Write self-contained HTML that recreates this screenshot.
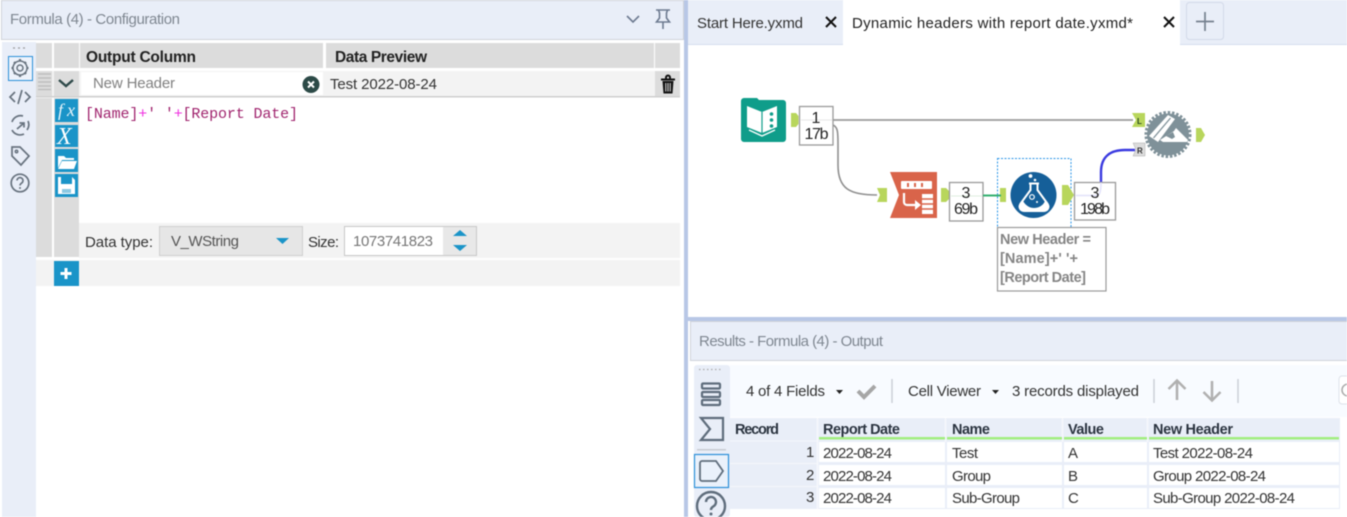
<!DOCTYPE html>
<html><head><meta charset="utf-8"><title>Formula Configuration</title>
<style>
html,body{margin:0;padding:0;width:1347px;height:517px;overflow:hidden;background:#fff}
svg{display:block;filter:blur(.4px)}
text{font-family:"Liberation Sans",sans-serif;font-size:15px;fill:#333;white-space:pre}
.t{fill:#7f8791}.b{font-weight:bold;fill:#222;font-size:15.5px}.m{font-family:"Liberation Mono",monospace;font-size:15px}
.h{font-weight:bold;fill:#2b3440;font-size:14.5px}.a{font-weight:bold;fill:#858585;font-size:14.5px}
.c{text-anchor:middle;fill:#222;font-size:16px}
</style></head><body>
<svg width="1347" height="517" viewBox="0 0 1347 517" xmlns="http://www.w3.org/2000/svg">
<rect width="1347" height="517" fill="#fff"/>
<!-- config header -->
<rect x="1.500" y="0.500" width="682" height="39" fill="#e9eef8" stroke="#d0d3da"/>
<text class="t" x="10" y="24" textLength="170">Formula (4) - Configuration</text>
<path d="M627 16l6 6 6-6" fill="none" stroke="#6d7a90" stroke-width="1.600"/>
<path d="M656 10h14M658.500 10l1 3v5l-3 4h13l-3-4v-5l1-3M663 22v7" fill="none" stroke="#6d7a90" stroke-width="1.600"/>
<!-- config side -->
<rect x="2" y="42" width="34" height="475" fill="#e9eef8"/>
<path d="M13 48h2M18 48h2M23 48h2" stroke="#9a9a9a" stroke-width="1.200"/>
<rect x="8.500" y="56.500" width="24" height="24" fill="#edf2fb" stroke="#2b8fd8" stroke-width="1"/>
<g fill="none" stroke="#68737f" stroke-width="1.500">
<circle cx="20" cy="68" r="3"/><circle cx="20" cy="68" r="7"/>
<path d="M20 59v2M20 75v2M11.500 68h2M26.500 68h2M14 62l1.500 1.500M24.500 72.500L26 74M14 74l1.500-1.500M24.500 63.500L26 62" stroke-width="2.200"/>
<path d="M15 92l-5 5 5 5M25 92l5 5-5 5M22 90l-4 14" stroke-width="1.700"/>
<path d="M12 122a9 9 0 0 1 11-6M28 121a9 9 0 0 1-1 9M24 134a9 9 0 0 1-12-4M17 129l7-6M19.500 123h4.500v4.500" stroke-width="1.700"/>
<path d="M12 147h8l9 9-8 9-9-9z" stroke-width="1.700"/><circle cx="16.500" cy="151.500" r="1.200"/>
<circle cx="20" cy="183" r="8.800" stroke-width="1.700"/>
<path d="M17 180.500a3 3 0 1 1 4.500 2.700c-1 .6-1.500 1-1.500 2.300" stroke-width="1.600"/>
</g><circle cx="20" cy="188" r="1" fill="#68737f"/>
<!-- grid header -->
<rect x="36" y="43" width="16" height="25" fill="#dcdcdc"/>
<rect x="54" y="43" width="25" height="25" fill="#dcdcdc"/>
<rect x="80" y="43" width="243" height="25" fill="#dcdcdc"/>
<rect x="326" y="43" width="328" height="25" fill="#dcdcdc"/>
<rect x="655" y="43" width="25" height="25" fill="#dcdcdc"/>
<text class="b" x="86" y="62" textLength="110">Output Column</text>
<text class="b" x="335" y="62" textLength="92">Data Preview</text>
<!-- row -->
<rect x="36" y="71" width="644" height="25" fill="#f3f3f3"/>
<rect x="36" y="96" width="644" height="1.500" fill="#cfcfcf"/>
<rect x="36" y="71" width="16" height="25" fill="#dcdcdc"/>
<rect x="54" y="71" width="25" height="25" fill="#dcdcdc"/>
<path d="M38 74h13M38 78h13M38 82h13M38 86h13M38 89.500h13" stroke="#bdbdbd" stroke-width="1.500"/>
<path d="M59 80l7 6 7-6" fill="none" stroke="#2f4a4a" stroke-width="2.400"/>
<rect x="81" y="72" width="242" height="23" fill="#fff"/>
<text x="93" y="88" textLength="82" style="fill:#808080">New Header</text>
<circle cx="311" cy="84.500" r="8.500" fill="#2c4a47"/>
<path d="M308 81.500l6 6M314 81.500l-6 6" stroke="#fff" stroke-width="2"/>
<text x="330" y="89" textLength="107">Test 2022-08-24</text>
<rect x="655" y="71" width="25" height="25" fill="#dcdcdc"/>
<path d="M661 79.500h14M666 79v-1.500a2 2 0 0 1 4 0V79" fill="none" stroke="#111" stroke-width="2"/>
<path d="M662.500 81h11l-1 12.500h-9z" fill="#111"/>
<path d="M665.800 83v8.500M668 83v8.500M670.200 83v8.500" stroke="#dcdcdc" stroke-width="1"/>
<!-- gutter -->
<rect x="36" y="98" width="16" height="159" fill="#dcdcdc"/>
<rect x="54" y="98" width="25" height="159" fill="#dcdcdc"/>
<g fill="#1a94c8">
<rect x="55" y="99" width="23" height="23"/><rect x="55" y="125" width="23" height="22"/>
<rect x="55" y="149" width="23" height="23"/><rect x="55" y="174" width="23" height="23"/>
</g>
<text x="58" y="116" textLength="17" style="font-family:'Liberation Serif',serif;font-style:italic;font-size:18px;fill:#e8f4fa">fx</text>
<text x="57" y="144" textLength="19" style="font-family:'Liberation Serif',serif;font-style:italic;font-size:24px;fill:#fff">X</text>
<path d="M58 156h6l2 2h8v2H62l-4 8zM62 161h15l-3 8H58z" fill="#fff"/>
<path d="M58 177h14l3 3v14H58z" fill="#fff"/>
<rect x="61" y="177" width="11" height="7" fill="#1a94c8"/><rect x="62" y="189" width="9" height="4" fill="#1a94c8" opacity=".5"/>
<!-- formula -->
<text class="m" x="85" y="118" textLength="213" style="fill:#a0246e">[Name]<tspan style="fill:#f030e0">+</tspan><tspan style="fill:#a0246e">' '</tspan><tspan style="fill:#f030e0">+</tspan>[Report Date]</text>
<!-- data type -->
<rect x="79" y="223" width="601" height="35" fill="#f3f3f3"/>
<text x="85" y="247" textLength="68">Data type:</text>
<rect x="159.500" y="226.500" width="143" height="29" fill="#e6e6e6" stroke="#cfcfcf"/>
<text x="171" y="246" textLength="68" style="fill:#555">V_WString</text>
<path d="M276 238h13l-6.500 6z" fill="#1a94c8"/>
<text x="308" y="247" textLength="31">Size:</text>
<rect x="344.500" y="226.500" width="132" height="29" fill="#fff" stroke="#c8c8c8"/>
<rect x="443" y="227" width="33" height="28" fill="#e8e8e8"/>
<text x="353" y="246" textLength="80" style="fill:#777">1073741823</text>
<path d="M453 236l7-6 7 6zM453 245h14l-7 6z" fill="#1a94c8"/>
<!-- plus row -->
<rect x="36" y="260" width="644" height="26" fill="#f3f3f3"/>
<rect x="54" y="261" width="25" height="25" fill="#1a94c8"/>
<path d="M66 268v11M60.500 273.500h11" stroke="#fff" stroke-width="3"/>
<!-- dividers -->
<rect x="684" y="0" width="4" height="517" fill="#b8c7e6"/>
<rect x="688" y="317" width="659" height="4" fill="#b8c7e6"/>
<!-- tabs -->
<rect x="688" y="0" width="659" height="45" fill="#e9eef8"/>
<rect x="688" y="44" width="659" height="1" fill="#d6deee"/>
<rect x="843" y="0" width="337" height="46" fill="#fff"/>
<rect x="1186.500" y="2.500" width="37" height="37" rx="3" fill="#e9eef8" stroke="#d2d9e8"/>
<path d="M1205 12v19M1196 21.500h18" stroke="#75808e" stroke-width="1.700"/>
<text x="697" y="28" textLength="106" style="fill:#333">Start Here.yxmd</text>
<path d="M826 17l10 10M836 17l-10 10M1164 17l10 10M1174 17l-10 10" stroke="#111" stroke-width="2"/>
<text x="852" y="28" textLength="281" style="fill:#222">Dynamic headers with report date.yxmd*</text>
<!-- canvas connections -->
<g fill="none">
<path d="M833 120H1133" stroke="#9a9a9a" stroke-width="1.800"/>
<path d="M833 125c5 2 5 8 5 20v20c0 24 12 30 39 30" stroke="#8f8f8f" stroke-width="1.600"/>
<path d="M1101 182v-10c0-16 10-22 24-22h10" stroke="#3a3ae0" stroke-width="2.400"/>
</g>
<!-- input tool -->
<path d="M744 98h13l2 2h24a3 3 0 0 1 3 3v36a3 3 0 0 1-3 3h-39a3 3 0 0 1-3-3v-38a3 3 0 0 1 3-3z" fill="#0f9d8a"/>
<path d="M747 106l15 6v21l-15-6zM777 106l-15 6v21l15-6z" fill="#fff"/>
<path d="M762 112v21" stroke="#0f9d8a" stroke-width="1.200"/>
<circle cx="771.500" cy="114" r="1.800" fill="#0f9d8a"/><circle cx="771.500" cy="120" r="1.800" fill="#0f9d8a"/><circle cx="771.500" cy="126" r="1.800" fill="#0f9d8a"/>
<path d="M749 128l13 6 13-6" fill="none" stroke="#fff" stroke-width="1.300" transform="translate(0 2)"/>
<path d="M791 113h5l2.500 3v8l-2.500 3h-5z" fill="#b8d65c"/>
<rect x="799.500" y="106.500" width="33.500" height="38.500" fill="#fff" stroke="#9a9a9a" stroke-width="1.300"/>
<path d="M801 120h31" stroke="#e6e6e6"/>
<text class="c" x="816" y="123">1</text><text class="c" x="816.500" y="139" textLength="24">17b</text>
<!-- select tool -->
<path d="M877 188h10v14h-10l3-7z" fill="#b8d65c"/>
<path d="M890 172h47v46h-47l9-23z" fill="#d9644a"/>
<rect x="901" y="181" width="31" height="8" rx="1" fill="#fff"/>
<path d="M908 183v4M915 183v4M922 183v4" stroke="#d9644a" stroke-width="2"/>
<path d="M904 193v9a3 3 0 0 0 3 3h9" fill="none" stroke="#fff" stroke-width="2.200"/>
<path d="M915 200l6 5-6 5z" fill="#fff"/>
<rect x="922" y="194" width="11" height="20" fill="#fff"/>
<path d="M922 199h11M922 204h11M922 209h11" stroke="#d9644a" stroke-width="1.500"/>
<path d="M941 188h5l3 3v8l-3 3h-5z" fill="#b8d65c"/>
<rect x="949.500" y="182.500" width="33.500" height="38.500" fill="#fff" stroke="#9a9a9a" stroke-width="1.300"/>
<path d="M951 196h31" stroke="#dfeedf"/>
<text class="c" x="966" y="198">3</text><text class="c" x="966" y="214" textLength="24">69b</text>
<!-- formula tool -->
<rect x="997.500" y="158.500" width="73.500" height="69" fill="#fff" stroke="#2b95e8" stroke-dasharray="2 1.500"/>
<rect x="1000" y="188" width="6" height="14" fill="#b8d65c"/>
<path d="M983 195.500h18" stroke="#35b070" stroke-width="2"/>
<circle cx="1033.500" cy="195" r="23" fill="#155f99"/>
<circle cx="1030.500" cy="176" r="1.900" fill="#fff"/><circle cx="1035" cy="180" r="1.300" fill="#fff"/>
<path d="M1029 183.500h10M1030.500 184v6l-9.500 13c-3 4-1 8 4 8h18c5 0 7-4 4-8l-9.500-13v-6" fill="none" stroke="#fff" stroke-width="2"/>
<path d="M1023 201c3 5 7 7 11 7s9-2 11-7l4 6-2 4h-26l-2-4z" fill="#fff"/>
<circle cx="1032" cy="197" r="2.300" fill="none" stroke="#fff" stroke-width="1.200"/><circle cx="1037" cy="202" r="1" fill="#fff"/>
<path d="M1062 185h6l6 10-6 10h-6z" fill="#b8d65c"/>
<rect x="1074.500" y="182.500" width="41" height="37.500" fill="#fff" stroke="#9a9a9a" stroke-width="1.300"/>
<path d="M1076 195.500h20c4 0 5-4 5-13" fill="none" stroke="#e2e2fa" stroke-width="1.500"/>
<text class="c" x="1095" y="198">3</text><text class="c" x="1095" y="214" textLength="30">198b</text>
<rect x="997.500" y="227.500" width="108.500" height="63.500" fill="#fff" stroke="#9a9a9a" stroke-width="1.200"/>
<text class="a" x="1000" y="244" textLength="91">New Header =</text>
<text class="a" x="1000" y="263" textLength="78">[Name]+' '+</text>
<text class="a" x="1000" y="282" textLength="86">[Report Date]</text>
<!-- join tool -->
<path d="M1132 113h13v14h-13l4-7z" fill="#b8d65c"/>
<text x="1137" y="124" style="font-size:8px;font-weight:bold;fill:#2a4a20">L</text>
<path d="M1133 143h12v13h-12l3-6.500z" fill="#dcdcdc" stroke="#aaa" stroke-width=".5"/>
<text x="1137" y="153.500" style="font-size:8px;font-weight:bold;fill:#333">R</text>
<circle cx="1168" cy="134.500" r="21" fill="#7f9199"/>
<circle cx="1168" cy="134.500" r="22" fill="none" stroke="#7f9199" stroke-width="3" stroke-dasharray="2.500 1.800"/>
<path d="M1160 140l14-9 2-3 12 12-1 2h-24z" fill="#fff"/>
<path d="M1166 136l7-4 2 5-3 2z" fill="#7f9199"/>
<path d="M1149 136l19-21 7 4-17 23z" fill="#fff"/>
<path d="M1153.500 138l17-20" stroke="#7f9199" stroke-width="1.300"/>
<path d="M1196 128h5l4 7-4 7h-5z" fill="#b8d65c"/>
<!-- results header -->
<rect x="690.500" y="321.500" width="657" height="39" fill="#e9eef8" stroke="#d0d3da"/>
<text class="t" x="699" y="346" textLength="184">Results - Formula (4) - Output</text>
<!-- results side -->
<rect x="694" y="365" width="36" height="152" rx="3" fill="#e9eef8"/>
<path d="M699 369.500h1.500M703 369.500h1.500M707 369.500h1.500M711 369.500h1.500M715 369.500h1.500M719 369.500h1.500" stroke="#aaa" stroke-width="1.200"/>
<g fill="none" stroke="#5f6d7c" stroke-width="2.200">
<rect x="702" y="383.500" width="18" height="5" rx="1"/><rect x="702" y="392" width="18" height="5" rx="1"/><rect x="702" y="400" width="18" height="5" rx="1"/>
<path d="M701 418h22v22h-22l9-11z"/>
</g>
<rect x="697" y="449" width="29" height="1.500" fill="#c8ccd2"/>
<rect x="694.500" y="454.500" width="34" height="33" fill="#eaf1fb" stroke="#2b8fd8" stroke-width="1.200"/>
<path d="M702 461h14l7 10-7 10h-14a2 2 0 0 1-2-2v-16a2 2 0 0 1 2-2z" fill="none" stroke="#5f6d7c" stroke-width="1.800"/>
<circle cx="711" cy="506" r="14" fill="none" stroke="#5f6d7c" stroke-width="2.400"/>
<path d="M706 502a5 5 0 1 1 7.500 4.300c-1.500 1-2.500 1.700-2.500 3.700" fill="none" stroke="#5f6d7c" stroke-width="2.400"/>
<circle cx="711" cy="514" r="1.500" fill="#5f6d7c"/>
<!-- toolbar -->
<rect x="730" y="365" width="617" height="52" fill="#f8fbff"/>
<text x="746" y="396" textLength="79">4 of 4 Fields</text>
<path d="M836 390h7l-3.500 4z" fill="#222"/>
<path d="M858 391l6 6 11-11" fill="none" stroke="#a6a6a6" stroke-width="4"/>
<path d="M892 379v24M1154 379v24M1238 379v24" stroke="#c8cdd4" stroke-width="1.400"/>
<text x="908" y="396" textLength="73">Cell Viewer</text>
<path d="M992 390h7l-3.500 4z" fill="#222"/>
<text x="1012" y="396" textLength="127">3 records displayed</text>
<path d="M1177 400v-19M1168.500 389l8.500-8.500 8.500 8.500M1212 381v19M1203.500 392l8.500 8.500 8.500-8.500" fill="none" stroke="#b0b0b0" stroke-width="2.500"/>
<rect x="1339" y="376" width="12" height="28" rx="3" fill="#fff" stroke="#dde2ea"/>
<circle cx="1348" cy="390" r="6" fill="none" stroke="#aaa" stroke-width="1.500"/>
<!-- table -->
<rect x="730" y="418" width="610" height="91" fill="#e9eef8"/>
<g fill="#fff">
<rect x="819" y="442" width="126" height="20"/><rect x="947" y="442" width="115" height="20"/><rect x="1064" y="442" width="83" height="20"/><rect x="1149" y="442" width="190" height="20"/>
<rect x="819" y="465" width="126" height="20"/><rect x="947" y="465" width="115" height="20"/><rect x="1064" y="465" width="83" height="20"/><rect x="1149" y="465" width="190" height="20"/>
<rect x="819" y="488" width="126" height="20"/><rect x="947" y="488" width="115" height="20"/><rect x="1064" y="488" width="83" height="20"/><rect x="1149" y="488" width="190" height="20"/>
</g>
<path d="M817.500 418v91M945.500 418v24M1062.500 418v24M1147.500 418v24" stroke="#f6f8fc" stroke-width="1.500"/>
<path d="M730 441h87M730 463.500h87M730 486.500h87" stroke="#f4f6fb" stroke-width="1.200"/>
<g fill="#a2ee80">
<rect x="819" y="437" width="126" height="2.500"/><rect x="947" y="437" width="115" height="2.500"/><rect x="1064" y="437" width="83" height="2.500"/><rect x="1149" y="437" width="190" height="2.500"/>
</g>
<text class="h" x="735" y="434" textLength="44">Record</text>
<text class="h" x="823" y="434" textLength="77">Report Date</text>
<text class="h" x="952" y="434" textLength="38">Name</text>
<text class="h" x="1068" y="434" textLength="36">Value</text>
<text class="h" x="1153" y="434" textLength="80">New Header</text>
<text x="806" y="457">1</text><text x="806" y="480">2</text><text x="806" y="502">3</text>
<text x="823" y="458" textLength="69">2022-08-24</text>
<text x="823" y="481" textLength="69">2022-08-24</text>
<text x="823" y="503" textLength="69">2022-08-24</text>
<text x="952" y="458" textLength="26">Test</text>
<text x="952" y="481" textLength="39">Group</text>
<text x="952" y="503" textLength="68">Sub-Group</text>
<text x="1068" y="458">A</text><text x="1068" y="481">B</text><text x="1068" y="503">C</text>
<text x="1153" y="458" textLength="100">Test 2022-08-24</text>
<text x="1153" y="481" textLength="113">Group 2022-08-24</text>
<text x="1153" y="503" textLength="142">Sub-Group 2022-08-24</text>
</svg>
</body></html>
